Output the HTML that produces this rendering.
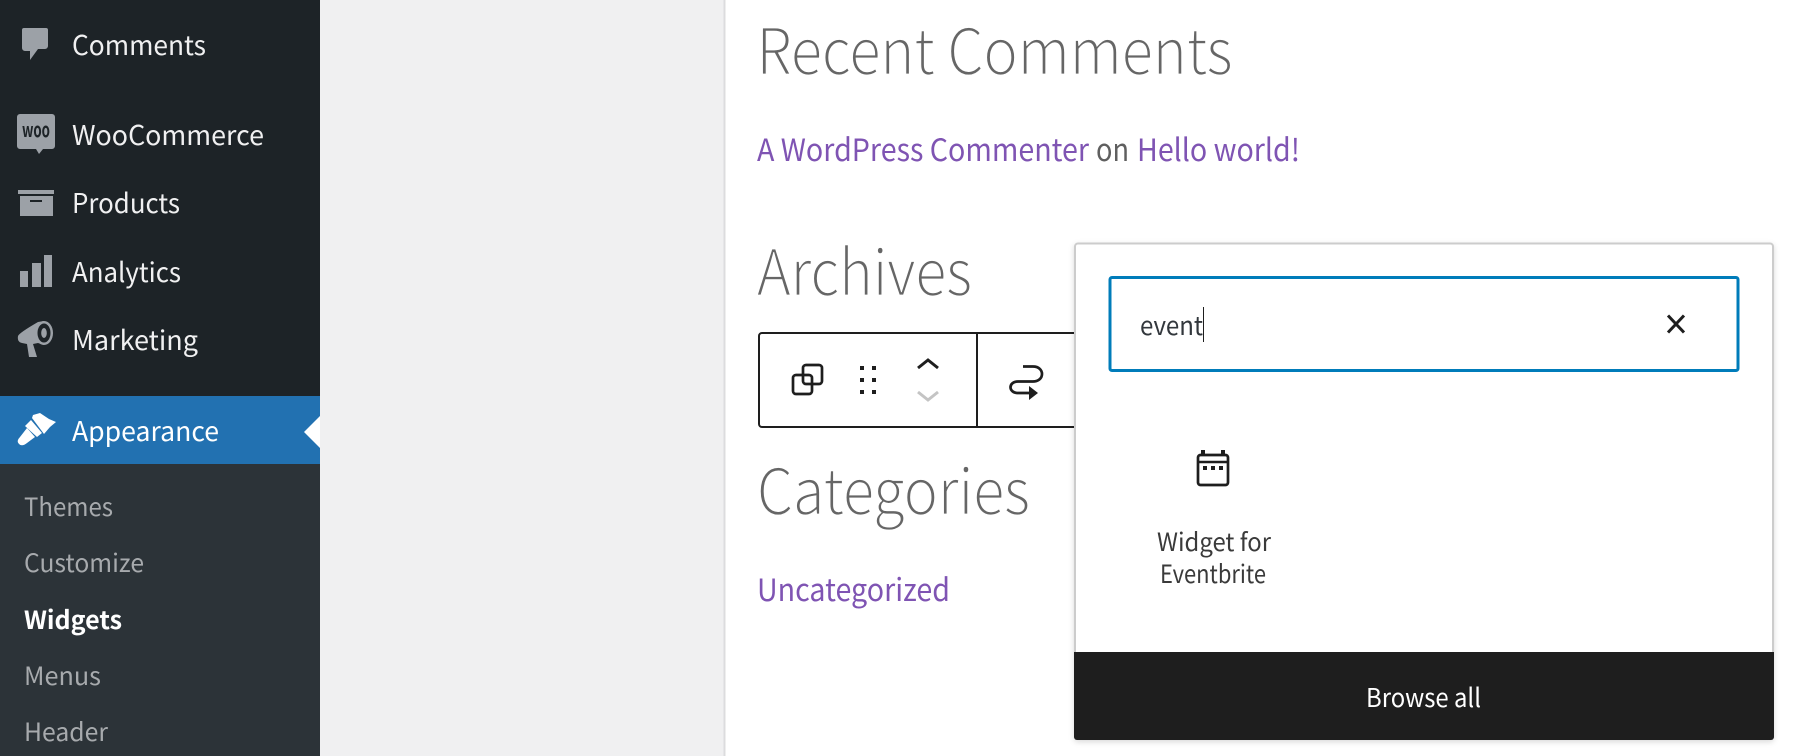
<!DOCTYPE html>
<html><head><meta charset="utf-8">
<style>
html,body{margin:0;padding:0;background:#fff;width:1805px;height:756px;overflow:hidden}
svg{display:block}
.s{font-family:"Noto Sans CJK JP","Liberation Sans",sans-serif}
.m{fill:#f0f0f1;font-size:27px}
.u{fill:#a7aaad;font-size:25px}
.h{fill:#666;font-size:63px;font-weight:300;stroke:#fff;stroke-width:.7px}
.p{font-size:31px;fill:#7f54b3}
</style></head><body>
<svg width="1805" height="756" viewBox="0 0 1805 756" xmlns="http://www.w3.org/2000/svg" class="s">
<defs><filter id="sh" x="-5%" y="-5%" width="110%" height="110%"><feDropShadow dx="0" dy="2" stdDeviation="3" flood-color="#000" flood-opacity=".15"/></filter></defs>
<rect x="320" width="405" height="756" fill="#f0f0f1"/>
<rect x="723.500" width="2" height="756" fill="#dcdcde"/>
<rect width="320" height="756" fill="#1d2327"/>
<rect y="396" width="320" height="68" fill="#2271b1"/>
<rect y="464" width="320" height="292" fill="#2c3338"/>
<path d="M304 432L320 416V448Z" fill="#fff"/>

<!-- sidebar icons -->
<path d="M24 28H46a2 2 0 0 1 2 2V46a3 3 0 0 1-3 3H38L30 60V51H25a3 3 0 0 1-3-3V30a2 2 0 0 1 2-2Z" fill="#9ca1a7"/>
<path d="M20 114H52a3 3 0 0 1 3 3V146a3 3 0 0 1-3 3H43L39 154L36 149H20a3 3 0 0 1-3-3V117a3 3 0 0 1 3-3Z" fill="#9ca1a7"/>
<text x="22" y="137" font-size="20" font-weight="700" fill="#1d2327" textLength="28" lengthAdjust="spacingAndGlyphs">woo</text>
<rect x="18" y="190" width="36" height="4" fill="#9ca1a7"/>
<path d="M20 196H53V216H20ZM30 200V202H42V200Z" fill="#9ca1a7" fill-rule="evenodd"/>
<path d="M20 271H28V287H20ZM32 263H41V287H32ZM44 255H52V287H44Z" fill="#9ca1a7"/>
<path d="M18 336Q19 333 38 322L44 321V345L38 343L33 344L37 357H29L27 344L22 343Q17 342 18 336Z" fill="#9ca1a7"/>
<ellipse cx="44" cy="333" rx="9" ry="12" fill="#9ca1a7"/>
<ellipse cx="44" cy="333" rx="6.500" ry="9.500" fill="#1d2327"/>
<ellipse cx="44" cy="333" rx="2.800" ry="5" fill="#9ca1a7"/>
<path d="M33 415L40 413L49 419L56 422L50 427L44 434L32 418Z" fill="#fff"/>
<path d="M31 420L42 433L37 437L25 426Z" fill="#fff"/>
<path d="M27 428L35 437L27 443Q22 447 19 444Q16 441 20 437Z" fill="#fff"/>

<!-- sidebar labels -->
<text class="m" x="72" y="55" textLength="134" lengthAdjust="spacingAndGlyphs">Comments</text>
<text class="m" x="72" y="145" textLength="192" lengthAdjust="spacingAndGlyphs">WooCommerce</text>
<text class="m" x="72" y="213" textLength="108" lengthAdjust="spacingAndGlyphs">Products</text>
<text class="m" x="72" y="282" textLength="109" lengthAdjust="spacingAndGlyphs">Analytics</text>
<text class="m" x="72" y="350" textLength="126" lengthAdjust="spacingAndGlyphs">Marketing</text>
<text class="m" x="72" y="441" style="fill:#fff" textLength="147" lengthAdjust="spacingAndGlyphs">Appearance</text>
<text class="u" x="24" y="516" textLength="89" lengthAdjust="spacingAndGlyphs">Themes</text>
<text class="u" x="24" y="572" textLength="120" lengthAdjust="spacingAndGlyphs">Customize</text>
<text class="u" x="24" y="629" style="fill:#fff;font-weight:700" textLength="98" lengthAdjust="spacingAndGlyphs">Widgets</text>
<text class="u" x="24" y="685" textLength="77" lengthAdjust="spacingAndGlyphs">Menus</text>
<text class="u" x="24" y="741" textLength="84" lengthAdjust="spacingAndGlyphs">Header</text>

<!-- main content -->
<text class="h" x="756.500" y="74" textLength="476" lengthAdjust="spacingAndGlyphs">Recent Comments</text>
<text class="p" x="757" y="161" textLength="332" lengthAdjust="spacingAndGlyphs">A WordPress Commenter</text>
<text class="p" x="1096" y="161" style="fill:#5f5f5f" textLength="33" lengthAdjust="spacingAndGlyphs">on</text>
<text class="p" x="1137" y="161" textLength="163" lengthAdjust="spacingAndGlyphs">Hello world!</text>
<text class="h" x="757" y="295" textLength="215" lengthAdjust="spacingAndGlyphs">Archives</text>
<text class="h" x="757" y="514" textLength="273" lengthAdjust="spacingAndGlyphs">Categories</text>
<text class="p" x="757" y="601" textLength="193" lengthAdjust="spacingAndGlyphs">Uncategorized</text>

<!-- block toolbar -->
<path d="M1080 333H762a3 3 0 0 0-3 3V424a3 3 0 0 0 3 3H1080" fill="#fff" stroke="#1e1e1e" stroke-width="2"/>
<rect x="976" y="333" width="2" height="94" fill="#1e1e1e"/>
<g fill="none" stroke="#1e1e1e" stroke-width="2.700">
<rect x="793" y="375" width="19" height="19" rx="3"/>
<rect x="803" y="365" width="19" height="19" rx="3"/>
</g>
<path d="M860 366h4v4h-4zM872 366h4v4h-4zM860 378h4v4h-4zM872 378h4v4h-4zM860 390h4v4h-4zM872 390h4v4h-4z" fill="#1e1e1e"/>
<path d="M918 368L928 360L938 368" fill="none" stroke="#1e1e1e" stroke-width="3"/>
<path d="M918 392L928 400L938 392" fill="none" stroke="#c4c4c4" stroke-width="3"/>
<path d="M1023 366.500H1033C1045 366.500 1045 381.500 1033 381.500H1018C1008 381.500 1008 393 1018 393H1031" fill="none" stroke="#1e1e1e" stroke-width="2.700"/>
<path d="M1029 386L1038 393L1029 400Z" fill="#1e1e1e"/>

<!-- inserter popover -->
<rect x="1075" y="243.500" width="698" height="495.500" rx="3" fill="#fff" stroke="#ccc" stroke-width="2" filter="url(#sh)"/>
<path d="M1074 652H1774V737a3 3 0 0 1-3 3H1077a3 3 0 0 1-3-3Z" fill="#1e1e1e"/>
<rect x="1110" y="277.500" width="628" height="93" rx="2" fill="#fff" stroke="#007cba" stroke-width="3"/>
<text x="1140" y="335" font-size="26" fill="#32373c" textLength="63" lengthAdjust="spacingAndGlyphs">event</text>
<rect x="1203" y="307" width="1" height="35" fill="#1e1e1e"/>
<path d="M1668 315.500L1684 332.500M1684 315.500L1668 332.500" stroke="#1e1e1e" stroke-width="3" fill="none"/>
<rect x="1198" y="455" width="30" height="30" rx="2.500" fill="none" stroke="#1e1e1e" stroke-width="2.700"/>
<path d="M1198 462H1228" stroke="#1e1e1e" stroke-width="2.400"/>
<path d="M1201 450h4v5h-4zM1221 450h4v5h-4zM1203 466h4v4h-4zM1211 466h4v4h-4zM1219 466h4v4h-4z" fill="#1e1e1e"/>
<text x="1157" y="551" font-size="25" fill="#3a3a3a" textLength="114" lengthAdjust="spacingAndGlyphs">Widget for</text>
<text x="1160" y="583" font-size="25" fill="#3a3a3a" textLength="106" lengthAdjust="spacingAndGlyphs">Eventbrite</text>
<text x="1366" y="707" font-size="26" fill="#fff" textLength="115" lengthAdjust="spacingAndGlyphs">Browse all</text>
</svg>
</body></html>
